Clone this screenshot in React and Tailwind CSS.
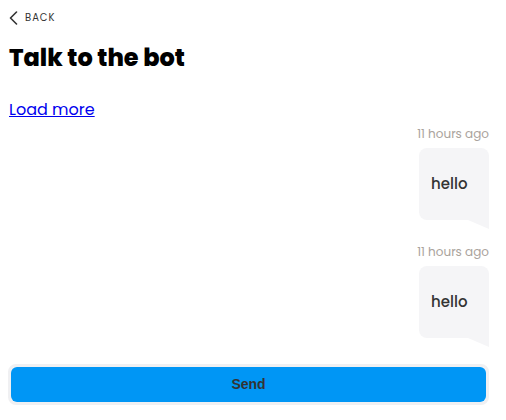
const messages = [
	{ id: 1, time: "11 hours ago", text: "hello" },
	{ id: 2, time: "11 hours ago", text: "hello" },
];

function Bubble({ text }) {
	return (
		<div className="relative ml-auto w-[70px] h-[72px] bg-[#f5f5f7] rounded-t-lg rounded-bl-lg flex items-center pl-3">
			<span className="text-[15px] font-medium text-[#333]">{text}</span>
			{/* tail */}
			<svg
				className="absolute right-0 top-full"
				width="21"
				height="9"
				viewBox="0 0 21 9"
			>
				<polygon points="0,0 21,0 21,9" fill="#f5f5f7" />
			</svg>
		</div>
	);
}

export default function App() {
	return (
		<div className="w-[506px] h-[420px] bg-white pl-[9px] pr-[17px] pt-[10px] font-['Poppins','Open_Sans',sans-serif]">
			<a className="flex items-center gap-[7px] text-[#333] h-[15px]">
				<svg width="9" height="14" viewBox="0 0 9 14" className="shrink-0">
					<polyline
						points="7.5,1 1.5,7 7.5,13"
						fill="none"
						stroke="#333"
						strokeWidth="1.6"
						strokeLinecap="round"
						strokeLinejoin="round"
					/>
				</svg>
				<span className="text-[10px] tracking-[1px]">BACK</span>
			</a>
			<h1 className="mt-[18px] text-[24px] leading-[30px] font-extrabold text-black">
				Talk to the bot
			</h1>
			<a className="block mt-[26px] text-[16px] leading-[22px] text-[#0000ee] underline w-fit">
				Load more
			</a>
			<div className="flex flex-col mt-[3px]">
				{messages.map((m, i) => (
					<div key={m.id} className={i === 0 ? "mt-0" : "mt-[22px]"}>
						<p className="text-right text-[12px] leading-[20px] text-[#aaa39c]">
							{m.time}
						</p>
						<div className="mt-[4px]">
							<Bubble text={m.text} />
						</div>
					</div>
				))}
			</div>
			<div className="mt-[26px] -ml-px mr-0 rounded-lg border-[3px] border-[#f0f0f2]">
				<button className="w-full h-[35px] rounded-md bg-[#0096f5] text-[14px] font-bold text-[#333] font-['Liberation_Sans',Arial,sans-serif]">
					Send
				</button>
			</div>
		</div>
	);
}
